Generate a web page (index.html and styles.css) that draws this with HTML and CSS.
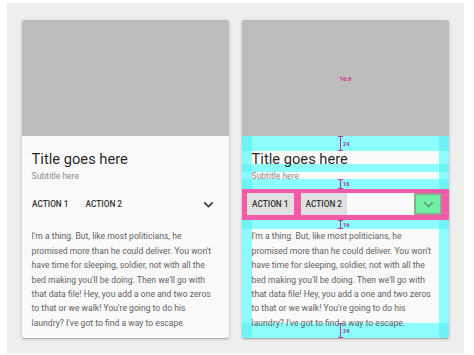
FILE: index.html
```html
<!DOCTYPE html>
<html lang="en">
<head>
<meta charset="utf-8">
<title>Cards</title>
<link rel="stylesheet" href="styles.css">
</head>
<body>
<main class="stage">
  <article class="card">
    <div class="media"></div>
    <div class="head">
      <h2 class="title">Title goes here</h2>
      <p class="sub">Subtitle here</p>
    </div>
    <div class="actions">
      <button class="btn">ACTION 1</button>
      <button class="btn">ACTION 2</button>
      <span class="spacer"></span>
      <button class="icon-btn" aria-label="Expand">
        <svg viewBox="0 0 24 24" class="chev"><path d="M7.41 8.59L12 13.17l4.59-4.58L18 10l-6 6-6-6 1.41-1.41z"/></svg>
      </button>
    </div>
    <div class="body">
      <p class="text">I'm a thing. But, like most politicians, he<br>promised more than he could deliver. You won't<br>have time for sleeping, soldier, not with all the<br>bed making you'll be doing. Then we'll go with<br>that data file! Hey, you add a one and two zeros<br>to that or we walk! You're going to do his<br>laundry? I've got to find a way to escape.</p>
    </div>
  </article>

  <article class="card redline">
    <div class="media"><span class="ratio">16:9</span></div>
    <div class="head">
      <span class="mark mark-24 at-top"><i></i><b>24</b></span>
      <h2 class="title">Title goes here</h2>
      <p class="sub">Subtitle here</p>
      <span class="mark mark-16 at-bottom"><i></i><b>16</b></span>
    </div>
    <div class="actions">
      <button class="btn">ACTION 1</button>
      <button class="btn">ACTION 2</button>
      <span class="spacer"></span>
      <button class="icon-btn" aria-label="Expand">
        <svg viewBox="0 0 24 24" class="chev"><path d="M7.41 8.59L12 13.17l4.59-4.58L18 10l-6 6-6-6 1.41-1.41z"/></svg>
      </button>
    </div>
    <div class="body">
      <span class="mark mark-16 at-top"><i></i><b>16</b></span>
      <p class="text">I'm a thing. But, like most politicians, he<br>promised more than he could deliver. You won't<br>have time for sleeping, soldier, not with all the<br>bed making you'll be doing. Then we'll go with<br>that data file! Hey, you add a one and two zeros<br>to that or we walk! You're going to do his<br>laundry? I've got to find a way to escape.</p>
      <span class="mark mark-24 at-bottom"><i></i><b>24</b></span>
    </div>
  </article>
</main>
</body>
</html>
```

FILE: styles.css
```css
html, body {
  margin: 0;
  padding: 0;
  background: #ffffff;
}

body {
  font-family: Roboto, "Liberation Sans", sans-serif;
  padding: 3px 10px 0 7px;
}

.stage {
  display: flex;
  gap: 13px;
  align-items: flex-start;
  background: #eeeeee;
  padding: 17px 15px 15px 15px;
}

.card {
  width: 207px;
  flex: 0 0 207px;
  background: #fafafa;
  border-radius: 2px;
  box-shadow: 0 1px 3px rgba(0, 0, 0, 0.24), 0 1px 1px rgba(0, 0, 0, 0.14);
  overflow: hidden;
}

.media {
  height: 116.4px;
  background: #bdbdbd;
  display: flex;
  align-items: center;
  justify-content: center;
}

.head {
  position: relative;
  padding: 14.4px 0 9.6px;
  display: flex;
  flex-direction: column;
  gap: 7.3px;
}

.title {
  margin: 0;
  padding: 0 9.6px;
  height: 13.6px;
  line-height: 17px;
  font-size: 14.7px;
  font-weight: 400;
  color: rgba(0, 0, 0, 0.87);
  white-space: nowrap;
}

.sub {
  margin: 0;
  padding: 0 9.6px;
  height: 7.3px;
  line-height: 9px;
  font-size: 8.5px;
  color: #8a8a8a;
  white-space: nowrap;
}

.actions {
  display: flex;
  align-items: center;
  gap: 7px;
  padding: 4.8px 7px 4.8px 5px;
}

.btn {
  font-family: inherit;
  height: 21.6px;
  border: 0;
  background: transparent;
  padding: 0 5px;
  font-size: 8.3px;
  font-weight: 500;
  letter-spacing: 0;
  color: #333333;
  border-radius: 1px;
}

.spacer {
  flex: 1;
  align-self: stretch;
}

.icon-btn {
  width: 28px;
  height: 21.6px;
  border: 0;
  padding: 0;
  background: transparent;
  display: flex;
  align-items: center;
  justify-content: center;
}

.chev {
  width: 19px;
  height: 19px;
  fill: #333333;
}

.body {
  position: relative;
  padding: 9.6px 0 14.4px;
}

.text {
  margin: 0;
  padding: 0 9.6px;
  height: 94px;
  font-size: 8.6px;
  line-height: 14.4px;
  color: #616161;
  white-space: nowrap;
}

/* ---------- redline overlay card ---------- */

.ratio {
  font-size: 6px;
  font-weight: 700;
  color: #d0308c;
}

.redline .head,
.redline .body {
  background: linear-gradient(90deg, #6df3f3 9.6px, #8cfcfc 9.6px, #8cfcfc calc(100% - 9.6px), #6df3f3 calc(100% - 9.6px));
}

.redline .title,
.redline .sub,
.redline .text {
  background: linear-gradient(90deg, #8cfcfc 9.6px, #fafafa 9.6px, #fafafa calc(100% - 9.6px), #8cfcfc calc(100% - 9.6px));
}

.redline .actions {
  background: #f05aa6;
}

.redline .btn {
  background: #e0e0e0;
}

.redline .spacer {
  background: #fafafa;
  margin: 0 -7px;
}

.redline .icon-btn {
  background: #6ff0a2;
  box-shadow: inset 0 0 0 2px rgba(190, 90, 130, 0.5);
}

.redline .chev {
  fill: #5f9a7c;
}

.mark {
  position: absolute;
  left: 98px;
  display: flex;
  align-items: center;
}

.mark i {
  display: block;
  width: 1px;
  height: 100%;
  background: #b03aa0;
  position: relative;
}

.mark i::before,
.mark i::after {
  content: "";
  position: absolute;
  left: -2px;
  width: 5px;
  height: 1px;
  background: #b03aa0;
}

.mark i::before { top: 0; }
.mark i::after { bottom: 0; }

.mark b {
  font-size: 5.5px;
  font-weight: 700;
  color: #8e3aa8;
  margin-left: 2px;
}

.mark-24 { height: 14.4px; }
.mark-16 { height: 9.6px; }

.at-top { top: 0; }
.at-bottom { bottom: 0; }
```
